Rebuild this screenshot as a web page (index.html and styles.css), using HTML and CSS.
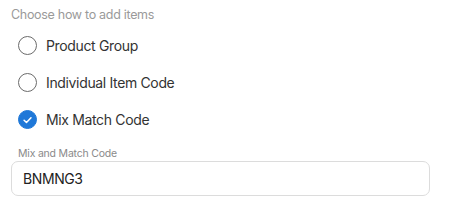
FILE: index.html
```html
<!DOCTYPE html>
<html>
    <head>
        <title>Add items</title>
        <meta name="viewport" content="width=device-width, initial-scale=1.0">
        <link rel="stylesheet" href="styles.css">
    </head>
    <body>
        <div class="panel">
            <p class="hint">Choose how to add items</p>

            <ul class="options">
                <li class="option">
                    <span class="radio"></span>
                    <span class="option-label">Product Group</span>
                </li>
                <li class="option">
                    <span class="radio"></span>
                    <span class="option-label">Individual Item Code</span>
                </li>
                <li class="option">
                    <span class="radio checked">
                        <svg width="18" height="18" viewBox="0 0 18 18">
                            <path d="M5.4 9.3 L7.9 11.7 L12.7 6.6" fill="none" stroke="#fff" stroke-width="1.6" stroke-linecap="round" stroke-linejoin="round"/>
                        </svg>
                    </span>
                    <span class="option-label">Mix Match Code</span>
                </li>
            </ul>

            <div class="field">
                <label class="field-label">Mix and Match Code</label>
                <div class="field-input">BNMNG3</div>
            </div>
        </div>
    </body>
</html>
```

FILE: styles.css
```css
/* ---- General ---- */
* {
    box-sizing: border-box;
    font-family: Inter, 'Noto Sans', sans-serif;
}

body {
    margin: 0;
    background-color: #fff;
}

.panel {
    padding: 7px 44px 0 11px;
}

.hint {
    color: #9a9a9a;
    font-size: 12.5px;
    letter-spacing: -0.3px;
    line-height: 16px;
    margin: 0;
}

/* ---- Radio options ---- */
.options {
    list-style: none;
    margin: 0;
    padding: 4px 0 0 7px;
}

.option {
    align-items: center;
    display: flex;
    gap: 9px;
    height: 37px;
}

.radio {
    border: 1.5px solid #6b6b6b;
    border-radius: 50%;
    display: flex;
    height: 19px;
    width: 19px;
}

.radio.checked {
    background-color: #1f78d8;
    border-color: #1f78d8;
    align-items: center;
    justify-content: center;
}

.option-label {
    color: #333;
    font-size: 14px;
    letter-spacing: -0.35px;
}

/* ---- Text field ---- */
.field {
    padding-top: 9px;
}

.field-label {
    color: #8a8a8a;
    display: block;
    font-size: 10.5px;
    letter-spacing: -0.2px;
    line-height: 14px;
    padding-left: 7px;
}

.field-input {
    align-items: center;
    border: 1px solid #dcdcdc;
    border-radius: 7px;
    color: #222;
    display: flex;
    font-size: 14px;
    height: 35px;
    letter-spacing: -0.4px;
    padding-left: 11px;
}
```
